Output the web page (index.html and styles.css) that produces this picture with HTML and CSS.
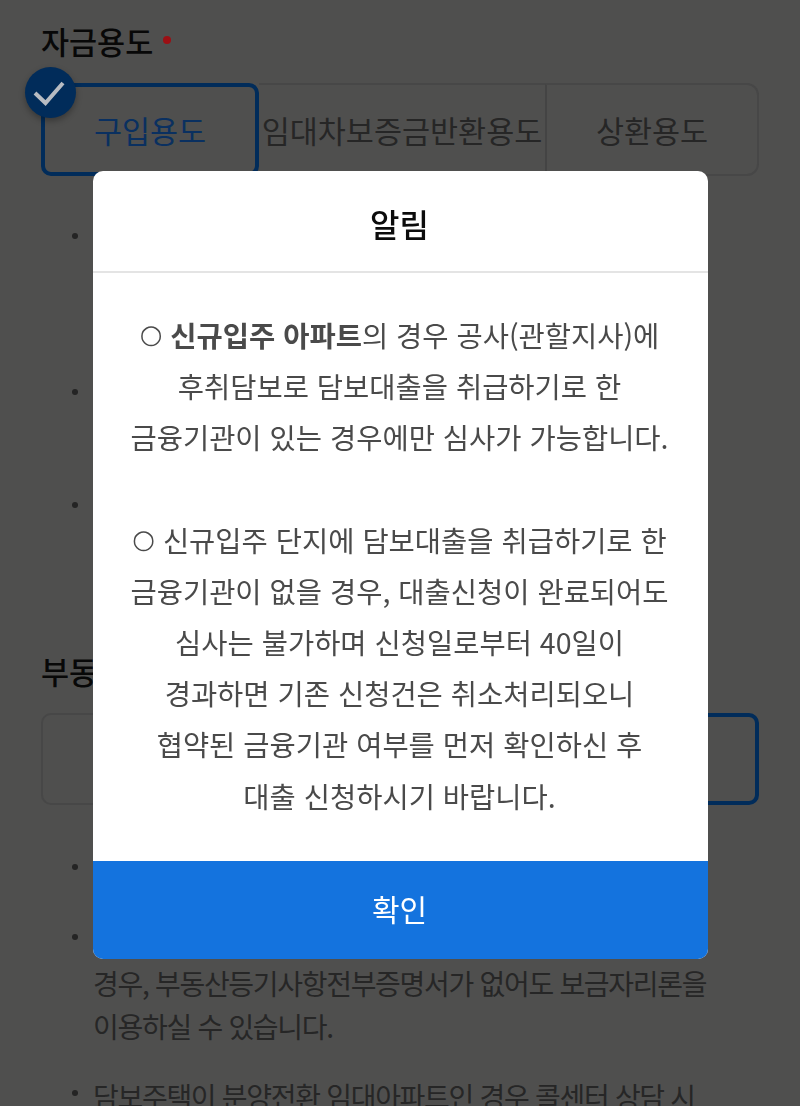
FILE: index.html
```html
<!DOCTYPE html>
<html lang="ko">
<head>
<meta charset="utf-8">
<title>자금용도</title>
<link rel="stylesheet" href="styles.css">
</head>
<body>
<main class="page">
  <section class="section">
    <h2 class="label">자금용도<span class="req"></span></h2>
    <div class="tabs">
      <div class="tab tab-a selected">
        <span class="check">
          <svg viewBox="0 0 51 51" width="51" height="51"><path d="M10 26 L20.500 36 L38 16" fill="none" stroke="#b8bcc2" stroke-width="4"/></svg>
        </span>
        구입용도
      </div>
      <div class="tab tab-b">임대차보증금반환용도</div>
      <div class="tab tab-c">상환용도</div>
    </div>
    <ul class="notes notes-top">
      <li class="l3"></li>
      <li class="l2"></li>
      <li class="l3"></li>
    </ul>
  </section>
  <section class="section section-two">
    <h2 class="label">부동산</h2>
    <div class="tabs tabs-two">
      <div class="tab tab-half"></div>
      <div class="tab tab-half selected"></div>
    </div>
    <ul class="notes notes-bottom">
      <li></li>
      <li>&nbsp;<br>경우, 부동산등기사항전부증명서가 없어도 보금자리론을<br>이용하실 수 있습니다.</li>
      <li>담보주택이 분양전환 임대아파트인 경우 콜센터 상담 시</li>
    </ul>
  </section>
</main>
<div class="overlay">
  <div class="modal">
    <h3 class="modal-title">알림</h3>
    <div class="modal-body">
      <p><span class="ring">○</span> <strong>신규입주 아파트</strong>의 경우 공사(관할지사)에<br>후취담보로 담보대출을 취급하기로 한<br>금융기관이 있는 경우에만 심사가 가능합니다.</p>
      <p><span class="ring">○</span> 신규입주 단지에 담보대출을 취급하기로 한<br>금융기관이 없을 경우, 대출신청이 완료되어도<br>심사는 불가하며 신청일로부터 40일이<br>경과하면 기존 신청건은 취소처리되오니<br>협약된 금융기관 여부를 먼저 확인하신 후<br>대출 신청하시기 바랍니다.</p>
    </div>
    <button class="confirm" type="button">확인</button>
  </div>
</div>
</body>
</html>
```

FILE: styles.css
```css
* { box-sizing: border-box; }
html, body {
  margin: 0;
  height: 1106px;
  overflow: hidden;
  background: #4f4f4e;
  font-family: "Noto Sans CJK KR", "Noto Sans", sans-serif;
}
.page { padding: 19px 41px 0; }
.label {
  margin: 0;
  height: 45px;
  font-size: 30.500px;
  line-height: 45px;
  font-weight: 500;
  color: #080808;
  display: flex;
  align-items: center;
}
.req {
  width: 8px;
  height: 8px;
  margin: -4px 0 0 10px;
  border-radius: 50%;
  background: #9c0f14;
}
.tabs {
  display: flex;
  margin-top: 19px;
  height: 93px;
}
.tab {
  display: flex;
  align-items: center;
  justify-content: center;
  font-size: 30.500px;
  color: #262626;
  border: 2px solid #474747;
  white-space: nowrap;
}
.tab-a { width: 218px; position: relative; }
.tab-b { width: 286px; border-left: 0; border-right: 0; }
.tab-c { width: 214px; border-radius: 0 12px 12px 0; border-left: 2px solid #444; }
.selected {
  border: 4px solid #012c5a;
  border-radius: 10px;
  color: #0a3060;
}
.check {
  position: absolute;
  left: -20px;
  top: -20px;
  width: 51px;
  height: 51px;
  border-radius: 50%;
  background: #012c5a;
  box-shadow: 0 3px 6px rgba(0, 0, 0, .3);
}
.check svg { display: block; }
.notes {
  list-style: none;
  margin: 0;
  padding: 0 0 0 52px;
  font-size: 28px;
  line-height: 43px;
  letter-spacing: -1.300px;
  color: #262626;
}
.notes li { position: relative; margin-bottom: 27px; white-space: nowrap; min-height: 43px; }
.notes li::before {
  content: "";
  position: absolute;
  left: -21px;
  top: 18px;
  width: 6px;
  height: 6px;
  border-radius: 50%;
  background: #242424;
}
.notes-top { margin-top: 39px; }
.notes .l3 { height: 129px; }
.notes .l2 { height: 86px; }
.section-two { margin-top: 36px; }
.tabs-two { margin-top: 19px; height: 92px; }
.tab-half { width: 50%; border-radius: 10px 0 0 10px; border-right: 0; }
.tab-half.selected { border-radius: 0 10px 10px 0; border: 4px solid #012c5a; }
.notes-bottom { margin-top: 39px; }
.notes-bottom li { padding-top: 5px; margin-bottom: 22px; min-height: 48px; }
.notes-bottom li::before { top: 20px; }
.overlay {
  position: fixed;
  inset: 0;
  display: flex;
  justify-content: center;
  align-items: flex-start;
  padding-top: 171px;
}
.modal {
  width: 615px;
  margin-left: 1px;
  height: 788px;
  background: #fff;
  border-radius: 10px;
  overflow: hidden;
  display: flex;
  flex-direction: column;
}
.modal-title {
  margin: 0;
  height: 102px;
  flex: none;
  border-bottom: 2px solid #e4e4e4;
  font-size: 32px;
  line-height: 104px;
  font-weight: 500;
  color: #0c0c0c;
  text-align: center;
  padding-right: 2px;
}
.modal-body {
  flex: 1;
  padding: 36px 2px 0 0;
  text-align: center;
  font-size: 28.500px;
  line-height: 51.200px;
  color: #4a4a4a;
}
.modal-body p { margin: 0 0 51px; }
.modal-body p:last-child { margin-bottom: 0; }
.modal-body strong { font-weight: 700; }
.ring {
  font-family: "DejaVu Sans", sans-serif;
  font-size: 26px;
  line-height: 0;
  vertical-align: 4px;
}
.confirm {
  flex: none;
  height: 98px;
  border: 0;
  padding: 0 2px 4px 0;
  background: #1473de;
  color: #fff;
  font: inherit;
  font-size: 30px;
}
```
